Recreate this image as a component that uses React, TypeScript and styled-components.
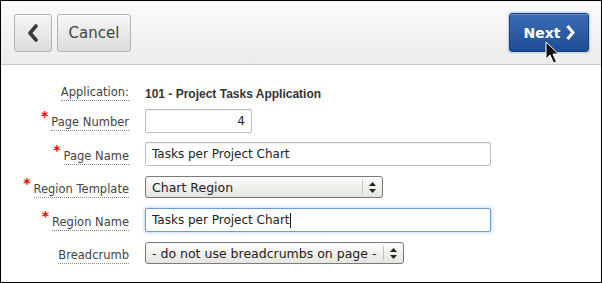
import React from "react";
import styled, { createGlobalStyle } from "styled-components";

const Global = createGlobalStyle`
  html, body { margin: 0; padding: 0; background: #fff; }
  body { font-family: "DejaVu Sans", "Liberation Sans", sans-serif; }
  * { box-sizing: border-box; }
`;

const Frame = styled.div`
  position: relative;
  width: 602px;
  height: 283px;
  border: 1px solid #000;
  background: #fff;
  overflow: hidden;
`;

const Header = styled.div`
  position: relative;
  height: 64px;
  display: flex;
  align-items: flex-start;
  padding: 13px 12px 0 13px;
  gap: 5px;
  background: linear-gradient(#fbfbfb, #ececec);
  border-bottom: 1px solid #c9c9c9;
`;

const GrayButton = styled.button<{ $w: number }>`
  width: ${(p) => p.$w}px;
  height: 38px;
  display: flex;
  align-items: center;
  justify-content: center;
  padding: 0;
  border: 1px solid #b3b3b3;
  border-radius: 3px;
  background: linear-gradient(#f6f6f6, #dcdcdc);
  box-shadow: inset 0 1px 0 #fff;
  font-family: "DejaVu Sans", sans-serif;
  font-size: 15px;
  color: #444;
  cursor: pointer;
`;

const Spacer = styled.div`
  flex: 1;
`;

const NextButton = styled.button`
  width: 80px;
  height: 39px;
  display: flex;
  align-items: center;
  justify-content: center;
  gap: 5px;
  padding: 0 0 0 2px;
  border: 1px solid #1a3f7c;
  border-radius: 3px;
  background: linear-gradient(#3c6cb6, #1f4d95);
  box-shadow: 0 0 2px 1px rgba(120, 160, 220, 0.5), inset 0 1px 0 rgba(255,255,255,0.25);
  font-family: "DejaVu Sans", sans-serif;
  font-weight: bold;
  font-size: 14px;
  color: #fff;
  cursor: pointer;
  margin-top: -1px;
`;

const Cursor = styled.svg`
  position: absolute;
  left: 544px;
  top: 40px;
`;

const Form = styled.div`
  display: grid;
  grid-template-columns: 128px 1fr;
  column-gap: 16px;
  grid-auto-rows: 33px;
  grid-template-rows: 24px;
  align-items: end;
  padding-top: 16px;
`;

const LabelCell = styled.div<{ $pb: number }>`
  display: flex;
  justify-content: flex-end;
  align-items: flex-end;
  padding-bottom: ${(p) => p.$pb}px;
`;

const Required = styled.span`
  color: #e00;
  font-size: 14px;
  font-weight: bold;
  line-height: 1;
  margin-right: 3px;
  position: relative;
  top: -8px;
`;

const LabelText = styled.span`
  font-size: 11.5px;
  color: #444;
  line-height: 13px;
  border-bottom: 1px dotted #8a8a8a;
  padding-bottom: 1px;
`;

const FieldCell = styled.div<{ $pb: number }>`
  display: flex;
  align-items: flex-end;
  padding-bottom: ${(p) => p.$pb}px;
`;

const StaticValue = styled.span`
  font-family: "Liberation Sans", Arial, sans-serif;
  font-size: 12px;
  font-weight: bold;
  color: #333;
  line-height: 13px;
  padding-bottom: 4px;
`;

const TextInput = styled.div<{ $w: number; $focus?: boolean; $right?: boolean }>`
  width: ${(p) => p.$w}px;
  height: 24px;
  display: flex;
  align-items: center;
  justify-content: ${(p) => (p.$right ? "flex-end" : "flex-start")};
  padding: 0 6px;
  border: 1px solid ${(p) => (p.$focus ? "#6f9ad6" : "#bdbdbd")};
  border-radius: 2px;
  background: #fff;
  box-shadow: ${(p) =>
    p.$focus ? "0 0 3px 1px rgba(120,165,230,0.45)" : "inset 0 1px 1px rgba(0,0,0,0.06)"};
  font-size: 12px;
  color: #222;
  white-space: nowrap;
`;

const Caret = styled.span`
  display: inline-block;
  width: 1px;
  height: 15px;
  background: #222;
`;

const SelectBox = styled.div<{ $w: number }>`
  width: ${(p) => p.$w}px;
  height: 22px;
  display: flex;
  align-items: stretch;
  border: 1px solid #7a7a7a;
  border-radius: 3px;
  background: linear-gradient(#fdfdfc, #e6e4df);
  font-size: 12.5px;
  color: #222;
  overflow: hidden;
`;

const SelectValue = styled.span`
  flex: 1;
  display: flex;
  align-items: center;
  padding-left: 6px;
  white-space: nowrap;
`;

const ArrowCell = styled.span`
  width: 20px;
  display: flex;
  align-items: center;
  justify-content: center;
  border-left: 1px solid #c4c2bc;
  margin: 3px 0;
`;

const UpDown = () => (
  <svg width="7" height="11" viewBox="0 0 7 11">
    <path d="M3.5 0 L7 4 L0 4 Z M0 7 L7 7 L3.5 11 Z" fill="#222" />
  </svg>
);

type Row = {
  label: string;
  req?: boolean;
  field: React.ReactNode;
  lpb: number;
  fpb: number;
};

export default function App() {
  const rows: Row[] = [
    { label: "Page Number", req: true, lpb: 7, fpb: 5, field: <TextInput $w={107} $right>4</TextInput> },
    { label: "Page Name", req: true, lpb: 6, fpb: 5, field: <TextInput $w={346}>Tasks per Project Chart</TextInput> },
    {
      label: "Region Template",
      req: true,
      lpb: 6,
      fpb: 6,
      field: (
        <SelectBox $w={238}>
          <SelectValue>Chart Region</SelectValue>
          <ArrowCell><UpDown /></ArrowCell>
        </SelectBox>
      ),
    },
    {
      label: "Region Name",
      req: true,
      lpb: 6,
      fpb: 5,
      field: (
        <TextInput $w={346} $focus>
          <span>Tasks per Project Chart</span>
          <Caret />
        </TextInput>
      ),
    },
    {
      label: "Breadcrumb",
      lpb: 6,
      fpb: 6,
      field: (
        <SelectBox $w={259}>
          <SelectValue>- do not use breadcrumbs on page -</SelectValue>
          <ArrowCell><UpDown /></ArrowCell>
        </SelectBox>
      ),
    },
  ];

  return (
    <>
      <Global />
      <Frame>
        <Header>
          <GrayButton $w={38} aria-label="Back">
            <svg width="14" height="18" viewBox="0 0 14 18">
              <path d="M10 2 L4 9 L10 16" stroke="#3a3a3a" strokeWidth="3.6" fill="none" strokeLinecap="round" strokeLinejoin="round" />
            </svg>
          </GrayButton>
          <GrayButton $w={74}>Cancel</GrayButton>
          <Spacer />
          <NextButton>
            Next
            <svg width="11" height="17" viewBox="0 0 11 17">
              <path d="M2.5 2 L8 8.5 L2.5 15" stroke="#fff" strokeWidth="3" fill="none" />
            </svg>
          </NextButton>
          <Cursor width="17" height="24" viewBox="0 0 17 24">
            <path
              d="M1 1 L1 18 L5 14 L8.5 22 L11.5 20.8 L8 13 L13.5 13 Z"
              fill="#111"
              stroke="#fff"
              strokeWidth="1"
            />
          </Cursor>
        </Header>
        <Form>
          <LabelCell $pb={4}>
            <LabelText>Application:</LabelText>
          </LabelCell>
          <FieldCell $pb={0}>
            <StaticValue>101 - Project Tasks Application</StaticValue>
          </FieldCell>
          {rows.map((r) => (
            <React.Fragment key={r.label}>
              <LabelCell $pb={r.lpb}>
                {r.req && <Required>*</Required>}
                <LabelText>{r.label}</LabelText>
              </LabelCell>
              <FieldCell $pb={r.fpb}>{r.field}</FieldCell>
            </React.Fragment>
          ))}
        </Form>
      </Frame>
    </>
  );
}
